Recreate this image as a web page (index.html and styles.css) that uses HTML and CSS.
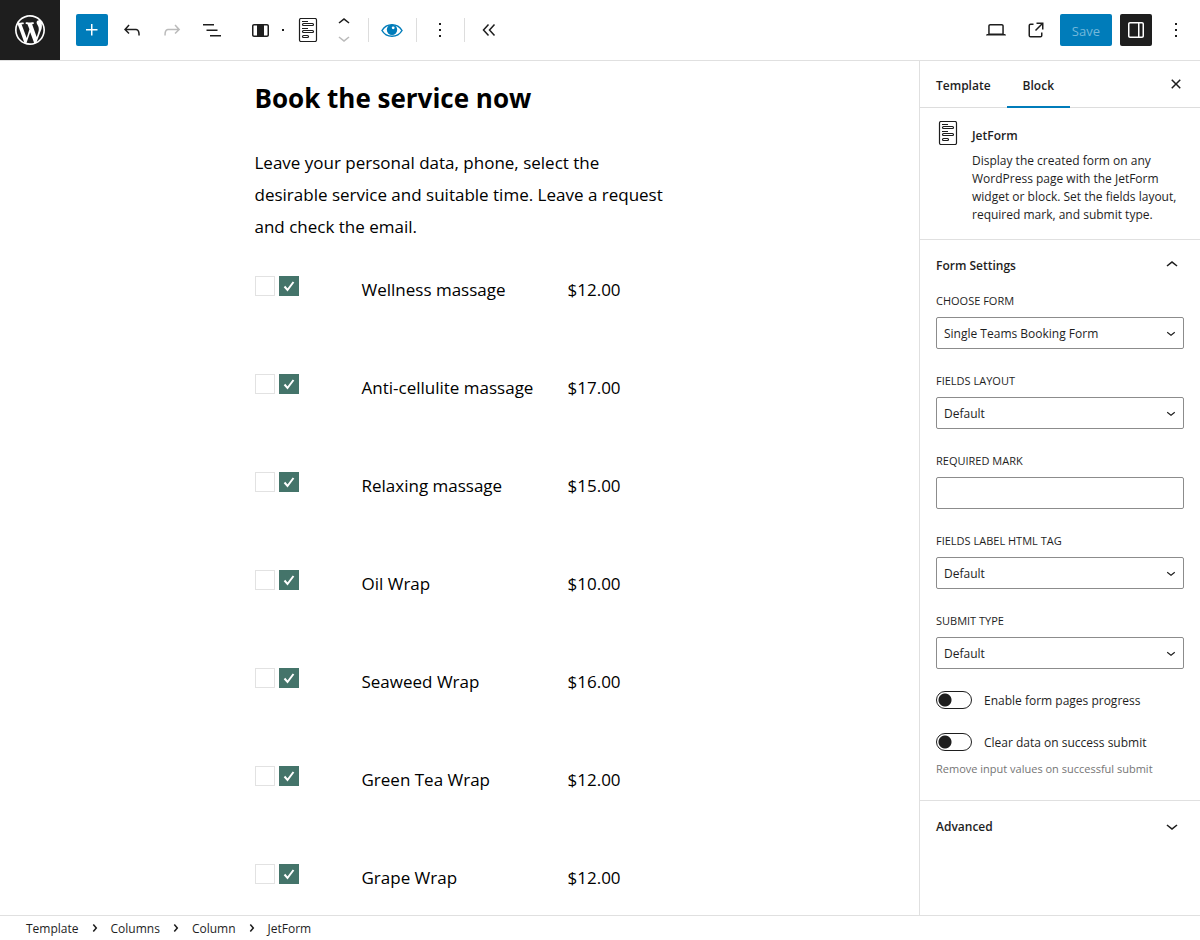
FILE: index.html
```html
<!DOCTYPE html>
<html lang="en">
<head>
  <meta charset="UTF-8">
  <meta name="viewport" content="width=device-width, initial-scale=1.0">
  <title>Edit Template</title>
  <link rel="stylesheet" href="styles.css">
</head>
<body>
  <svg class="sprite" aria-hidden="true">
    <symbol id="chevron-down" viewBox="0 0 24 24"><path d="M17.5 11.6L12 16l-5.5-4.4.9-1.2L12 14l4.5-3.6 1 1.2z"/></symbol>
    <symbol id="chevron-up" viewBox="0 0 24 24"><path d="M6.5 12.4L12 8l5.5 4.4-.9 1.2L12 10l-4.5 3.6-1-1.2z"/></symbol>
    <symbol id="chevron-right" viewBox="0 0 24 24"><path d="M10.9 8L14.3 12l-3.4 4-1.2-1 2.6-3-2.6-3z"/></symbol>
    <symbol id="more" viewBox="0 0 24 24"><path d="M13 19h-2v-2h2v2zm0-6h-2v-2h2v2zm0-6h-2V5h2v2z"/></symbol>
    <symbol id="jetform" viewBox="0 0 24 24">
      <g fill="none" stroke="currentColor" stroke-width="1.2">
        <rect x="3.5" y="0.5" width="17" height="23" rx="1.5"/>
        <path d="M6 3.5h6M6 10.5h6"/>
        <rect x="6.5" y="5.5" width="11" height="2" rx="1"/>
        <rect x="6.5" y="12.5" width="11" height="2" rx="1"/>
        <rect x="6.5" y="17.5" width="6" height="2" rx="1"/>
      </g>
    </symbol>
  </svg>

  <header class="topbar">
    <a class="wp-logo" href="#" aria-label="Dashboard">
      <svg viewBox="-2 -2 24 24"><path d="M20 10c0-5.51-4.49-10-10-10C4.48 0 0 4.49 0 10c0 5.52 4.48 10 10 10 5.51 0 10-4.48 10-10zM7.78 15.37L4.37 6.22c.55-.02 1.17-.08 1.17-.08.5-.06.44-1.13-.06-1.11 0 0-1.45.11-2.37.11-.18 0-.37 0-.58-.01C4.12 2.69 6.87 1.11 10 1.11c2.33 0 4.45.87 6.05 2.34-.68-.11-1.65.39-1.65 1.58 0 .74.45 1.36.9 2.1.35.61.55 1.36.55 2.46 0 1.49-1.4 5-1.4 5l-3.03-8.37c.54-.02.82-.17.82-.17.5-.05.44-1.25-.06-1.22 0 0-1.44.12-2.38.12-.87 0-2.33-.12-2.33-.12-.5-.03-.56 1.2-.06 1.22l.92.08 1.26 3.41zM17.41 10c.24-.64.74-1.87.43-4.25.7 1.29 1.05 2.71 1.05 4.25 0 3.29-1.73 6.24-4.4 7.78.97-2.59 1.94-5.2 2.92-7.78zM6.1 18.09C3.12 16.65 1.11 13.53 1.11 10c0-1.3.23-2.48.72-3.59C3.25 10.3 4.67 14.2 6.1 18.09zm4.03-6.63l2.58 6.98c-.86.29-1.76.45-2.71.45-.79 0-1.57-.11-2.29-.33.81-2.38 1.62-4.74 2.42-7.1z"/></svg>
    </a>
    <div class="tools">
      <button class="btn btn-primary" aria-label="Add block"><svg viewBox="0 0 24 24"><path d="M11 12.5V17.5H12.5V12.5H17.5V11H12.5V6H11V11H6V12.5H11Z"/></svg></button>
      <button class="btn" aria-label="Undo"><svg viewBox="0 0 24 24"><path d="M18.3 11.7c-.6-.6-1.4-.9-2.3-.9H6.7l2.9-3.3-1.1-1-4.5 5L8.5 16l1-1-2.7-2.7H16c.5 0 .9.2 1.3.5 1 1 1 3.4 1 4.5v.3h1.5v-.2c0-1.5 0-4.3-1.5-5.7z"/></svg></button>
      <button class="btn" aria-label="Redo" disabled><svg viewBox="0 0 24 24"><path d="M15.6 6.5l-1.1 1 2.9 3.3H8c-.9 0-1.7.3-2.3.9-1.4 1.5-1.4 4.2-1.4 5.6v.2h1.5v-.3c0-1.1 0-3.5 1-4.5.3-.3.7-.5 1.3-.5h9.2L14.5 15l1.1 1.1 4.6-4.6-4.6-5z"/></svg></button>
      <button class="btn" aria-label="List view"><svg viewBox="0 0 24 24"><path d="M3 6h11v1.5H3V6zm3.5 5.5h11V13h-11v-1.5zM21 17H10v1.5h11V17z"/></svg></button>
    </div>
    <div class="block-tools">
      <button class="btn" aria-label="Select Column"><svg viewBox="0 0 24 24"><path d="M19 6H6c-1.1 0-2 .9-2 2v9c0 1.1.9 2 2 2h13c1.1 0 2-.9 2-2V8c0-1.1-.9-2-2-2zM6 17.5c-.3 0-.5-.2-.5-.5V8c0-.3.2-.5.5-.5h3v10H6zm13.5-.5c0 .3-.2.5-.5.5h-3v-10h3c.3 0 .5.2.5.5v9z"/></svg></button>
      <span class="dot"></span>
      <button class="btn" aria-label="JetForm"><svg><use href="#jetform"/></svg></button>
      <div class="movers">
        <button aria-label="Move up"><svg><use href="#chevron-up"/></svg></button>
        <button aria-label="Move down" disabled><svg><use href="#chevron-down"/></svg></button>
      </div>
      <div class="group">
        <button class="btn btn-eye" aria-label="Preview form">
          <svg viewBox="0 0 24 24">
            <path class="line" d="M2 12.5C4.3 8.5 7.8 6.7 12 6.7s7.7 1.8 10 5.8c-2.3 4-5.8 5.8-10 5.8S4.300 16.500 2 12.500z"/>
            <circle cx="12" cy="11.8" r="5.2"/>
            <circle class="glint" cx="13.2" cy="9.8" r="1.4"/>
          </svg>
        </button>
      </div>
      <div class="group">
        <button class="btn" aria-label="Options"><svg><use href="#more"/></svg></button>
      </div>
      <div class="group">
        <button class="btn" aria-label="Hide block tools"><svg viewBox="0 0 24 24"><path class="line" d="M12.5 6.5l-5 5.5 5 5.5M18.5 6.5l-5 5.5 5 5.5"/></svg></button>
      </div>
    </div>
    <div class="actions">
      <button class="btn" aria-label="View"><svg viewBox="0 0 24 24"><path d="M20.5 16h-.7V8c0-1.1-.9-2-2-2H6.2c-1.1 0-2 .9-2 2v8h-.7c-.8 0-1.5.7-1.5 1.5h20c0-.8-.7-1.5-1.5-1.5zM5.7 8c0-.3.2-.5.5-.5h11.6c.3 0 .5.2.5.5v7.6H5.7V8z"/></svg></button>
      <button class="btn" aria-label="View site"><svg viewBox="0 0 24 24"><path d="M19.5 4.5h-7V6h4.44l-5.97 5.97 1.06 1.06L18 7.06v4.44h1.5v-7zm-13 1a2 2 0 0 0-2 2v10a2 2 0 0 0 2 2h10a2 2 0 0 0 2-2v-3H17v3a.5.5 0 0 1-.5.5h-10a.5.5 0 0 1-.5-.5v-10a.5.5 0 0 1 .5-.5h3V5.5h-3z"/></svg></button>
      <button class="btn btn-primary btn-save">Save</button>
      <button class="btn btn-dark" aria-label="Settings"><svg viewBox="0 0 24 24"><path d="M18 4H6c-1.1 0-2 .9-2 2v12c0 1.1.9 2 2 2h12c1.1 0 2-.9 2-2V6c0-1.1-.9-2-2-2zm-4 14.5H6c-.3 0-.5-.2-.5-.5V6c0-.3.2-.5.5-.5h8v13zm4.5-.5c0 .3-.2.5-.5.5h-2.5v-13H18c.3 0 .5.2.5.5v12z"/></svg></button>
      <button class="btn" aria-label="Options"><svg><use href="#more"/></svg></button>
    </div>
  </header>

  <div class="editor">
    <main class="canvas">
      <div class="column">
        <h1>Book the service now</h1>
        <p>Leave your personal data, phone, select the desirable service and suitable time. Leave a request and check the email.</p>
        <ul class="services" id="services"></ul>
      </div>
    </main>

    <aside class="sidebar">
      <div class="tabs">
        <button class="tab">Template</button>
        <button class="tab active">Block</button>
        <button class="btn btn-close" aria-label="Close settings"><svg viewBox="0 0 24 24"><path d="M12 13.06l3.712 3.713 1.061-1.06L13.061 12l3.712-3.712-1.06-1.06L12 10.938 8.288 7.227l-1.061 1.06L10.939 12l-3.712 3.712 1.06 1.061L12 13.061z"/></svg></button>
      </div>

      <section class="card">
        <svg><use href="#jetform"/></svg>
        <div>
          <h2>JetForm</h2>
          <p>Display the created form on any WordPress page with the JetForm widget or block. Set the fields layout, required mark, and submit type.</p>
        </div>
      </section>

      <section class="panel">
        <button class="panel-title">Form Settings <svg><use href="#chevron-up"/></svg></button>
        <div class="fields">
          <div class="field">
            <label for="form">Choose form</label>
            <div class="select"><select id="form"><option>Single Teams Booking Form</option></select><svg><use href="#chevron-down"/></svg></div>
          </div>
          <div class="field">
            <label for="layout">Fields layout</label>
            <div class="select"><select id="layout"><option>Default</option></select><svg><use href="#chevron-down"/></svg></div>
          </div>
          <div class="field">
            <label for="mark">Required mark</label>
            <input type="text" id="mark">
          </div>
          <div class="field">
            <label for="tag">Fields label HTML tag</label>
            <div class="select"><select id="tag"><option>Default</option></select><svg><use href="#chevron-down"/></svg></div>
          </div>
          <div class="field">
            <label for="submit">Submit type</label>
            <div class="select"><select id="submit"><option>Default</option></select><svg><use href="#chevron-down"/></svg></div>
          </div>
        </div>
        <label class="toggle"><input type="checkbox"> Enable form pages progress</label>
        <label class="toggle"><input type="checkbox"> Clear data on success submit</label>
        <p class="help">Remove input values on successful submit</p>
      </section>

      <section class="panel closed">
        <button class="panel-title">Advanced <svg><use href="#chevron-down"/></svg></button>
      </section>
    </aside>
  </div>

  <footer class="breadcrumb">
    <a href="#">Template</a>
    <svg><use href="#chevron-right"/></svg>
    <a href="#">Columns</a>
    <svg><use href="#chevron-right"/></svg>
    <a href="#">Column</a>
    <svg><use href="#chevron-right"/></svg>
    <a href="#">JetForm</a>
  </footer>

  <script>
    const services = [
      ["Wellness massage", "$12.00"],
      ["Anti-cellulite massage", "$17.00"],
      ["Relaxing massage", "$15.00"],
      ["Oil Wrap", "$10.00"],
      ["Seaweed Wrap", "$16.00"],
      ["Green Tea Wrap", "$12.00"],
      ["Grape Wrap", "$12.00"]
    ];
    document.getElementById("services").innerHTML = services.map(([name, price], i) => `
      <li>
        <span class="checks">
          <input type="checkbox" id="service${i}">
          <span class="mark"><svg viewBox="0 0 20 20"><path d="M5.5 10.5l3 3.5 6-8"/></svg></span>
        </span>
        <label for="service${i}">${name}</label>
        <span>${price}</span>
      </li>`).join("");
  </script>
</body>
</html>
```
FILE: styles.css
```css
* { box-sizing: border-box; }
body { margin: 0; height: 100vh; display: flex; flex-direction: column; overflow: hidden; font-family: "Open Sans", "Noto Sans", sans-serif; font-size: 12px; color: #1e1e1e; background: #fff; }
button, input, select { font: inherit; color: inherit; margin: 0; }
button { padding: 0; border: 0; background: none; cursor: pointer; }
svg { width: 24px; height: 24px; fill: currentColor; display: block; flex: none; }
.sprite { position: absolute; width: 0; height: 0; }

/* top bar */
.topbar { display: flex; align-items: center; height: 61px; flex: none; border-bottom: 1px solid #e0e0e0; }
.wp-logo { width: 60px; height: 60px; display: flex; align-items: center; justify-content: center; background: #1e1e1e; color: #fff; }
.wp-logo svg { width: 36px; height: 36px; }
.btn { width: 32px; height: 32px; display: flex; align-items: center; justify-content: center; border-radius: 2px; }
.btn:disabled { color: #bbb; }
.btn-primary { background: #007cba; color: #fff; }
.btn-dark { background: #1e1e1e; color: #fff; }
.btn-save { width: auto; padding: 2px 12px 0; color: #73b8db; font-size: 13px; }
.tools { display: flex; gap: 8px; padding-left: 16px; }
.block-tools { display: flex; align-items: center; padding-left: 16px; }
.dot { width: 2px; height: 2px; margin: 0 8px 0 6px; background: #1e1e1e; }
.movers { display: flex; flex-direction: column; padding: 0 12px 0 8px; }
.movers button { height: 16px; display: flex; align-items: center; }
.movers button:disabled { color: #bbb; }
.group { display: flex; align-items: center; height: 24px; padding: 0 8px 0 7px; border-left: 1px solid #ddd; }
.line { fill: none; stroke: currentColor; stroke-width: 1.5; }
.btn-eye { color: #007cba; }
.btn-eye .glint { fill: #fff; }
.actions { display: flex; gap: 8px; margin-left: auto; padding-right: 8px; }

/* canvas */
.editor { flex: 1; display: flex; min-height: 0; }
.canvas { flex: 1; overflow: hidden; color: #000; }
.column { width: 410px; margin: 0 auto; }
.column h1 { margin: 19px 0 31px; font-size: 26px; line-height: 36px; font-weight: 700; }
.column p { margin: 0 0 33px; font-size: 17px; line-height: 32px; }
.services { margin: 0; padding: 0; list-style: none; font-size: 17px; line-height: 28px; }
.services li { display: grid; grid-template-columns: 107px 206px 1fr; height: 98px; }
.checks { display: flex; gap: 4px; }
.checks input { appearance: none; width: 20px; height: 20px; border: 1px solid #e2e2e2; background: #fff; }
.mark { width: 20px; height: 20px; background: #44746a; }
.mark svg { width: 20px; height: 20px; fill: none; stroke: #fff; stroke-width: 2; }

/* sidebar */
.sidebar { width: 281px; flex: none; border-left: 1px solid #e0e0e0; overflow: hidden; }
.tabs { display: flex; height: 47px; align-items: stretch; border-bottom: 1px solid #ddd; }
.tab { margin-bottom: -1px; padding: 4px 16px 0; border-bottom: 2px solid transparent; font-weight: 600; }
.tab.active { border-bottom-color: #007cba; }
.btn-close { width: 24px; height: 46px; margin: 0 12px 0 auto; }
.card { display: flex; gap: 12px; padding: 13px 16px 15px; border-bottom: 1px solid #e0e0e0; }
.card h2 { margin: 5px 0 6px; font-size: 12px; line-height: 20px; font-weight: 600; }
.card p { margin: 0; line-height: 18px; }
.panel { padding: 0 16px 22px; border-bottom: 1px solid #e0e0e0; }
.panel.closed { padding-bottom: 0; border-bottom: 0; }
.panel-title { display: flex; align-items: center; justify-content: space-between; width: 100%; height: 50px; font-weight: 600; }
.fields { display: grid; gap: 24px; margin: 3px 0 22px; }
.field label { display: block; margin-bottom: 8px; font-size: 11px; line-height: 16px; text-transform: uppercase; }
.select { display: grid; align-items: center; }
.select select, .field input { display: block; width: 100%; height: 32px; padding: 0 7px; border: 1px solid #8c8c8c; border-radius: 2px; background: #fff; appearance: none; }
.select select, .select svg { grid-area: 1 / 1; }
.select svg { width: 18px; height: 18px; margin-right: 4px; justify-self: end; pointer-events: none; }
.toggle { display: flex; align-items: center; gap: 12px; height: 18px; margin-bottom: 24px; }
.toggle input { appearance: none; width: 36px; height: 18px; border: 1px solid #1e1e1e; border-radius: 9px; background: radial-gradient(circle at 8px 8px, #1e1e1e 6px, transparent 7px); }
.help { margin: -15px 0 0; font-size: 11px; line-height: 18px; color: #757575; }

/* breadcrumb */
.breadcrumb { display: flex; align-items: center; gap: 4px; height: 25px; flex: none; padding-left: 26px; border-top: 1px solid #e0e0e0; }
.breadcrumb a { color: inherit; text-decoration: none; }
```
